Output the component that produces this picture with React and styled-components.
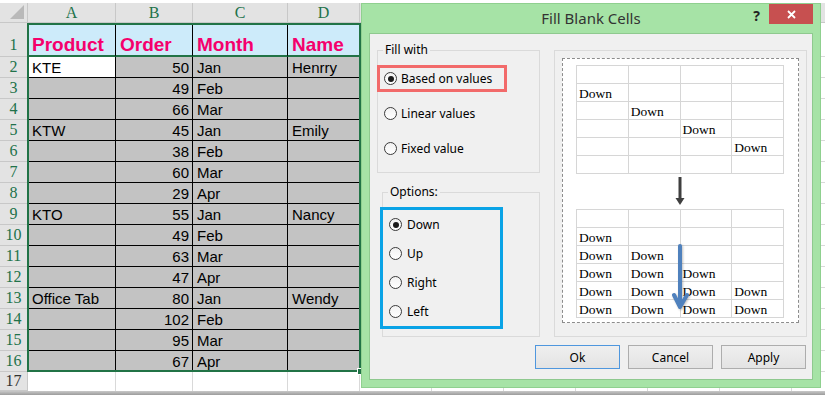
import React from "react";
import styled, { createGlobalStyle } from "styled-components";

const GlobalStyle = createGlobalStyle`
  body {
    margin: 0;
    background: #fff;
    overflow: hidden;
  }
  * {
    box-sizing: border-box;
  }
`;

const colKeys = ["A", "B", "C", "D"];
const extraCols = 7;
const titles = ["Product", "Order", "Month", "Name"];
const rows = [
  ["KTE", "50", "Jan", "Henrry"],
  ["", "49", "Feb", ""],
  ["", "66", "Mar", ""],
  ["KTW", "45", "Jan", "Emily"],
  ["", "38", "Feb", ""],
  ["", "60", "Mar", ""],
  ["", "29", "Apr", ""],
  ["KTO", "55", "Jan", "Nancy"],
  ["", "49", "Feb", ""],
  ["", "63", "Mar", ""],
  ["", "47", "Apr", ""],
  ["Office Tab", "80", "Jan", "Wendy"],
  ["", "102", "Feb", ""],
  ["", "95", "Mar", ""],
  ["", "67", "Apr", ""],
];

const previewTop = [
  ["", "", "", ""],
  ["Down", "", "", ""],
  ["", "Down", "", ""],
  ["", "", "Down", ""],
  ["", "", "", "Down"],
  ["", "", "", ""],
];
const previewBottom = [
  ["", "", "", ""],
  ["Down", "", "", ""],
  ["Down", "Down", "", ""],
  ["Down", "Down", "Down", ""],
  ["Down", "Down", "Down", "Down"],
  ["Down", "Down", "Down", "Down"],
];

const App = () => {
  return (
    <Screen>
      <GlobalStyle />
      <Sheet>
        <Corner>
          <svg width="14" height="14" viewBox="0 0 14 14">
            <polygon points="14,0 14,14 0,14" fill="#b9b9b9" />
          </svg>
        </Corner>
        {colKeys.map((k) => (
          <ColHead key={k} $selected>
            {k}
          </ColHead>
        ))}
        {/* columns hidden behind the dialog */}
        {Array.from({ length: extraCols }).map((_, i) => (
          <ColHead key={"x" + i} />
        ))}

        <RowHead $selected $tall>
          1
        </RowHead>
        {titles.map((t, i) => (
          <TitleCell key={t} $last={i === 3}>
            {t}
          </TitleCell>
        ))}
        {Array.from({ length: extraCols }).map((_, i) => (
          <BlankCell key={"t" + i} />
        ))}

        {rows.map((r, ri) => (
          <React.Fragment key={ri}>
            <RowHead $selected>{ri + 2}</RowHead>
            {r.map((v, ci) => (
              <DataCell
                key={ci}
                $active={ri === 0 && ci === 0}
                $right={ci === 1}
                $last={ci === 3}
              >
                {v}
              </DataCell>
            ))}
            {Array.from({ length: extraCols }).map((_, i) => (
              <BlankCell key={"b" + i} />
            ))}
          </React.Fragment>
        ))}

        <RowHead>17</RowHead>
        {Array.from({ length: 4 + extraCols }).map((_, i) => (
          <BlankCell key={"r17" + i} $noBottom />
        ))}
      </Sheet>
      <ShadowBar />

      <Selection>
        <FillHandle />
      </Selection>

      <Dialog>
        <TitleBar>
          <Title>Fill Blank Cells</Title>
          <TitleActions>
            <Help>?</Help>
            <CloseButton>
              <svg width="9" height="9" viewBox="0 0 9 9">
                <path d="M1 1 L8 8 M8 1 L1 8" stroke="#fff" strokeWidth="1.8" />
              </svg>
            </CloseButton>
          </TitleActions>
        </TitleBar>

        <Client>
          <Body>
            <LeftCol>
              <FillGroup>
                <Legend>Fill with</Legend>
                <FillList>
                  <RedBox>
                    <Radio checked label="Based on values" />
                  </RedBox>
                  <FillRow>
                    <Radio label="Linear values" />
                  </FillRow>
                  <FillRow>
                    <Radio label="Fixed value" />
                  </FillRow>
                </FillList>
              </FillGroup>

              <OptionsGroup>
                <Legend>Options:</Legend>
                <BlueBox>
                  {["Down", "Up", "Right", "Left"].map((o, i) => (
                    <OptionRow key={o}>
                      <Radio checked={i === 0} label={o} $gap={5} />
                    </OptionRow>
                  ))}
                </BlueBox>
              </OptionsGroup>
            </LeftCol>

            <PreviewGroup>
              <Dashed>
                <MiniGrid data={previewTop} />
                <ArrowRow>
                  <svg width="12" height="35" viewBox="0 0 12 35">
                    <line x1="6" y1="3" x2="6" y2="26" stroke="#3f3f3f" strokeWidth="3" />
                    <polygon points="1.5,24 10.5,24 6,31" fill="#3f3f3f" />
                  </svg>
                </ArrowRow>
                <GridWrap>
                  <MiniGrid data={previewBottom} />
                  <BlueArrow width="24" height="70" viewBox="0 0 24 70">
                    <line
                      x1="12"
                      y1="3"
                      x2="12"
                      y2="62"
                      stroke="#4f81bd"
                      strokeWidth="4"
                      strokeLinecap="round"
                    />
                    <polyline
                      points="6,52 12,64 19,52"
                      fill="none"
                      stroke="#4f81bd"
                      strokeWidth="4"
                      strokeLinecap="round"
                      strokeLinejoin="round"
                    />
                  </BlueArrow>
                </GridWrap>
              </Dashed>
            </PreviewGroup>
          </Body>

          <ButtonRow>
            <DlgButton $primary>Ok</DlgButton>
            <DlgButton>Cancel</DlgButton>
            <DlgButton>Apply</DlgButton>
          </ButtonRow>
        </Client>
      </Dialog>
    </Screen>
  );
};

const Radio = ({ checked, label, $gap = 4 }) => (
  <RadioLabel $gap={$gap}>
    <RadioCircle>{checked && <RadioDot />}</RadioCircle>
    {label}
  </RadioLabel>
);

const MiniGrid = ({ data }) => (
  <Grid>
    {data.flat().map((v, i) => (
      <GridCell key={i}>{v}</GridCell>
    ))}
  </Grid>
);

export default App;

const Screen = styled.div`
  position: relative;
  width: 825px;
  height: 395px;
  overflow: hidden;
  background: #fff;
  display: flex;
  flex-direction: column;
`;

const Sheet = styled.div`
  display: grid;
  grid-template-columns: 28px 88px 77px 95px 72px repeat(${extraCols}, 72px);
  grid-template-rows: 20px 34px repeat(15, 21px) 19px;
  padding-top: 3px;
  font-family: "Liberation Sans", Arial, sans-serif;
`;

const ShadowBar = styled.div`
  height: 4px;
  background: linear-gradient(#c9c9c9, #9c9c9c);
`;

const HeadBase = styled.div`
  background: #e3e3e3;
  border-right: 1px solid #c8c8c8;
  border-bottom: 1px solid #c8c8c8;
  font-family: "Liberation Serif", "DejaVu Serif", serif;
  font-size: 16px;
  display: flex;
  justify-content: center;
`;

const Corner = styled(HeadBase)`
  align-items: flex-end;
  justify-content: flex-end;
  padding: 0 3px 3px 0;
`;

const ColHead = styled(HeadBase)`
  align-items: center;
  color: ${(p) => (p.$selected ? "#21724a" : "#444")};
`;

const RowHead = styled(HeadBase)`
  align-items: ${(p) => (p.$tall ? "flex-end" : "center")};
  padding-bottom: ${(p) => (p.$tall ? "2px" : "0")};
  color: ${(p) => (p.$selected ? "#21724a" : "#333")};
`;

const TitleCell = styled.div`
  background: #cdebfa;
  border-right: ${(p) => (p.$last ? "none" : "1px solid #000")};
  border-bottom: 2px solid #217346;
  color: #f5006c;
  font-weight: bold;
  font-size: 19px;
  display: flex;
  align-items: flex-end;
  padding: 0 3px 0 4px;
  line-height: 20px;
`;

const DataCell = styled.div`
  background: ${(p) => (p.$active ? "#fff" : "#c3c3c3")};
  border-right: ${(p) => (p.$last ? "none" : "1px solid #000")};
  border-bottom: 1px solid #000;
  color: #000;
  font-size: 15px;
  display: flex;
  align-items: center;
  justify-content: ${(p) => (p.$right ? "flex-end" : "flex-start")};
  padding: 0 3px 0 ${(p) => (p.$right ? "3px" : "4px")};
  white-space: nowrap;
`;

const BlankCell = styled.div`
  background: #fff;
  border-right: 1px solid #d9d9d9;
  border-bottom: ${(p) => (p.$noBottom ? "none" : "1px solid #d9d9d9")};
`;

const Selection = styled.div`
  position: absolute;
  left: 27px;
  top: 23px;
  width: 334px;
  height: 349px;
  border: 2px solid #217346;
  pointer-events: none;
`;

const FillHandle = styled.div`
  position: absolute;
  right: -5px;
  bottom: -5px;
  width: 7px;
  height: 7px;
  background: #217346;
  border: 1px solid #fff;
`;

const Dialog = styled.div`
  position: absolute;
  left: 361px;
  top: 3px;
  width: 460px;
  height: 385px;
  background: #a6e3a6;
  border: 1px solid #8fd08f;
  display: flex;
  flex-direction: column;
  font-family: "Noto Sans", "Open Sans", sans-serif;
  font-size: 12px;
  color: #000;
`;

const TitleBar = styled.div`
  height: 29px;
  display: grid;
  grid-template-columns: 90px 1fr 90px;
  align-items: start;
`;

const Title = styled.div`
  grid-column: 2;
  text-align: center;
  font-size: 15px;
  line-height: 28px;
  color: #333;
`;

const TitleActions = styled.div`
  justify-self: end;
  display: flex;
  align-items: flex-start;
  margin-right: 7px;
`;

const Help = styled.span`
  font-weight: bold;
  font-size: 14px;
  line-height: 20px;
  color: #222;
  margin-right: 9px;
  margin-top: 2px;
`;

const CloseButton = styled.div`
  width: 44px;
  height: 20px;
  background: #c75050;
  display: flex;
  align-items: center;
  justify-content: center;
`;

const Client = styled.div`
  flex: 1;
  margin: 0 7px 7px 7px;
  background: #f0f0f0;
  border: 1px solid #8fc98f;
  padding: 16px 5px 0 7px;
  display: flex;
  flex-direction: column;
`;

const Body = styled.div`
  display: flex;
  gap: 14px;
`;

const LeftCol = styled.div`
  width: 163px;
  display: flex;
  flex-direction: column;
`;

const Group = styled.div`
  position: relative;
  border: 1px solid #dadada;
`;

const Legend = styled.span`
  position: absolute;
  top: -9px;
  left: 5px;
  padding: 0 2px;
  background: #f0f0f0;
  line-height: 16px;
`;

const FillGroup = styled(Group)`
  height: 123px;
`;

const FillList = styled.div`
  display: flex;
  flex-direction: column;
  gap: 8px;
  padding-top: 14px;
`;

const RedBox = styled.div`
  width: 130px;
  height: 27px;
  margin-left: -1px;
  border: 3px solid #f26a6a;
  display: flex;
  align-items: center;
  padding-left: 4px;
`;

const FillRow = styled.div`
  height: 27px;
  display: flex;
  align-items: center;
  padding-left: 6px;
`;

const OptionsGroup = styled(Group)`
  margin-top: 19px;
  margin-left: 5px;
  width: 158px;
  height: 145px;
`;

const BlueBox = styled.div`
  width: 123px;
  height: 122px;
  margin: 14px 0 0 -3px;
  border: 3px solid #0aa3e6;
  display: flex;
  flex-direction: column;
`;

const OptionRow = styled.div`
  flex: 1;
  display: flex;
  align-items: center;
  padding-left: 6px;
`;

const RadioLabel = styled.label`
  display: flex;
  align-items: center;
  gap: ${(p) => p.$gap}px;
  white-space: nowrap;
`;

const RadioCircle = styled.span`
  width: 13px;
  height: 13px;
  border-radius: 50%;
  border: 1px solid #3a3a3a;
  background: linear-gradient(#f2f2f2, #fff);
  display: flex;
  align-items: center;
  justify-content: center;
`;

const RadioDot = styled.span`
  width: 6px;
  height: 6px;
  border-radius: 50%;
  background: #1a1a1a;
`;

const PreviewGroup = styled(Group)`
  width: 253px;
  height: 287px;
  padding: 7px;
`;

const Dashed = styled.div`
  height: 265px;
  border: 1px dashed #8c8c8c;
  background: #fff;
  padding: 6px 0 0 13px;
  display: flex;
  flex-direction: column;
`;

const Grid = styled.div`
  width: 208px;
  display: grid;
  grid-template-columns: repeat(4, 1fr);
  border-left: 1px solid #d6d6d6;
  border-top: 1px solid #d6d6d6;
`;

const GridCell = styled.div`
  height: 18px;
  border-right: 1px solid #d6d6d6;
  border-bottom: 1px solid #d6d6d6;
  font-family: "Liberation Serif", "DejaVu Serif", serif;
  font-size: 13.5px;
  line-height: 19px;
  padding-left: 2px;
  overflow: hidden;
`;

const ArrowRow = styled.div`
  width: 208px;
  height: 35px;
  display: flex;
  justify-content: center;
`;

const GridWrap = styled.div`
  position: relative;
  width: 208px;
`;

const BlueArrow = styled.svg`
  position: absolute;
  left: 92px;
  top: 34px;
  filter: drop-shadow(1px 1px 1px rgba(0, 0, 0, 0.25));
`;

const ButtonRow = styled.div`
  margin-top: 8px;
  display: flex;
  justify-content: flex-end;
  gap: 8px;
  padding-right: 1px;
`;

const DlgButton = styled.button`
  width: 85px;
  height: 24px;
  font-family: "Noto Sans", "Open Sans", sans-serif;
  font-size: 12px;
  color: #000;
  background: linear-gradient(#efefef, #e3e3e3);
  border: 1px solid ${(p) => (p.$primary ? "#4f97de" : "#adadad")};
  padding: 0;
`;
